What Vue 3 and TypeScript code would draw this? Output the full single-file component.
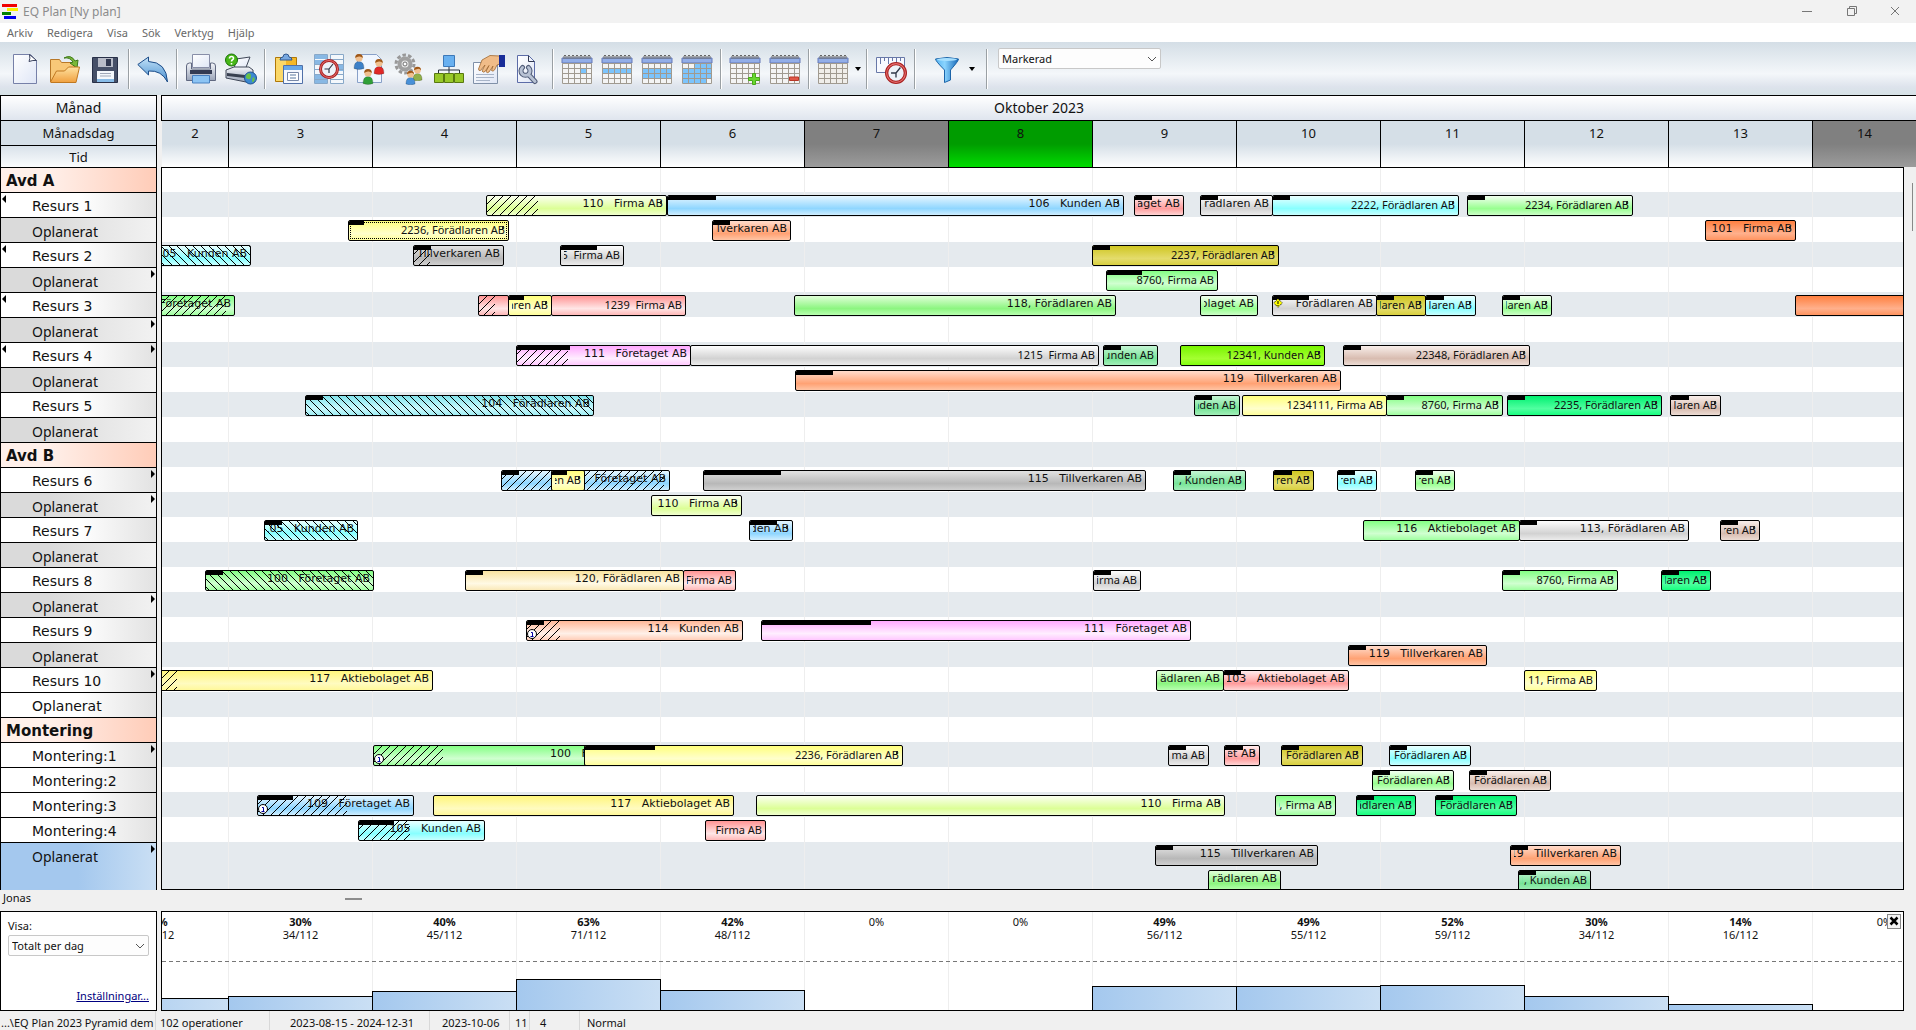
<script setup lang="ts">
import { ref } from 'vue'

interface Extra {
  mark?: number
  hatch?: number
  back?: boolean
  note?: boolean
  wide?: boolean
  selected?: boolean
  info?: boolean
  warn?: boolean
}
interface Bar extends Extra {
  from: number
  to: number
  tone: string
  text: string
}
interface Row {
  label: string
  kind: 'group' | 'resource' | 'unplanned' | 'plain' | 'active'
  prev?: boolean
  next?: boolean
  lanes: Bar[][]
}

const ORIGIN = 162

const tones: Record<string, string[]> = {
  lime: ['#fbfff0', '#dcff96', '#f0ffd0'],
  sky: ['#e6f6ff', '#8fd6ff', '#cfeeff'],
  rose: ['#ffecec', '#ff9c9c', '#ffd5d5'],
  coral: ['#ff9494', '#ffe6e6', '#ffb8b8'],
  silver: ['#fdfdfd', '#d2d2d2', '#ececec'],
  aqua: ['#eaffff', '#88ffff', '#c8ffff'],
  spring: ['#f2fff0', '#98ff90', '#ccffc8'],
  leaf: ['#84ff84', '#d0ffd0', '#a0ffa0'],
  grass: ['#e0ffd8', '#8cf580', '#b8ffb0'],
  lemon: ['#ffff7c', '#ffffcc', '#ffff9c'],
  sun: ['#fff67c', '#fffbc0', '#fff89a'],
  salmon: ['#ffdccc', '#ffa274', '#ffc4a4'],
  orange: ['#ff8040', '#ffb08c', '#ff9460'],
  gray: ['#e2e2e2', '#b8b8b8', '#d0d0d0'],
  olive: ['#cfc622', '#e4dc6c', '#d8d040'],
  mint: ['#c4f5d4', '#78e498', '#a0eeb8'],
  neon: ['#78f400', '#a4ff30', '#80ff10'],
  beige: ['#f8eeea', '#d8bcb0', '#ecdcd4'],
  violet: ['#ffa8ff', '#ffeeff', '#ffc8ff'],
  teal: ['#84e4ec', '#c8f8fc', '#a0eef4'],
  emerald: ['#00f070', '#50ffa0', '#18ff80'],
  cream: ['#f9e3a0', '#fff9e4', '#fae9b8'],
  peach: ['#ffb898', '#fff0e8', '#ffceb8'],
}

const bar = (from: number, to: number, tone: string, text: string, extra: Extra = {}): Bar => ({
  from, to, tone, text, ...extra,
})
const gap = '\u00a0\u00a0\u00a0'
const job = (no: string, name: string) => no + gap + name

const rows: Row[] = [
  { label: 'Avd A', kind: 'group', lanes: [[]] },
  { label: 'Resurs 1', kind: 'resource', prev: true, lanes: [[
    bar(486, 667, 'lime', job('110', 'Firma AB'), { hatch: 538, note: true, wide: true }),
    bar(667, 1124, 'sky', job('106', 'Kunden AB'), { mark: 716, note: true, wide: true }),
    bar(1134, 1184, 'rose', job('103', 'Aktiebolaget AB'), { mark: 1152, wide: true }),
    bar(1200, 1273, 'silver', '113, Förädlaren AB', { mark: 1218, wide: true }),
    bar(1272, 1459, 'aqua', '2222, Förädlaren AB', { mark: 1290, note: true }),
    bar(1467, 1633, 'spring', '2234, Förädlaren AB', { mark: 1485, note: true }),
  ]] },
  { label: 'Oplanerat', kind: 'unplanned', lanes: [[
    bar(348, 509, 'lemon', '2236, Förädlaren AB', { mark: 364, note: true, selected: true }),
    bar(712, 791, 'salmon', job('119', 'Tillverkaren AB'), { mark: 730, wide: true }),
    bar(1705, 1796, 'orange', job('101', 'Firma AB'), { note: true, wide: true }),
  ]] },
  { label: 'Resurs 2', kind: 'resource', prev: true, lanes: [[
    bar(120, 251, 'aqua', job('105', 'Kunden AB'), { hatch: 250, back: true, wide: true }),
    bar(413, 504, 'gray', job('115', 'Tillverkaren AB'), { mark: 431, hatch: 430, wide: true }),
    bar(560, 624, 'silver', '1215\u00a0\u00a0Firma AB', { mark: 597 }),
    bar(1092, 1279, 'olive', '2237, Förädlaren AB', { mark: 1110, note: true }),
  ]] },
  { label: 'Oplanerat', kind: 'unplanned', next: true, lanes: [[
    bar(1106, 1218, 'leaf', '8760, Firma AB', { mark: 1142 }),
  ]] },
  { label: 'Resurs 3', kind: 'resource', prev: true, lanes: [[
    bar(120, 235, 'leaf', job('100', 'Företaget AB'), { hatch: 226, wide: true }),
    bar(478, 509, 'coral', '', { hatch: 495 }),
    bar(508, 552, 'lemon', '2236, Förädlaren AB', { mark: 524, note: true }),
    bar(551, 686, 'coral', '1239\u00a0\u00a0Firma AB'),
    bar(794, 1116, 'grass', '118, Förädlaren AB', { wide: true }),
    bar(1200, 1258, 'spring', job('116', 'Aktiebolaget AB'), { wide: true }),
    bar(1272, 1377, 'silver', 'Förädlaren AB', { mark: 1309, warn: true, wide: true }),
    bar(1376, 1426, 'olive', '2237, Förädlaren AB', { mark: 1394, note: true }),
    bar(1425, 1476, 'aqua', '2222, Förädlaren AB', { mark: 1444, note: true }),
    bar(1502, 1552, 'spring', '2234, Förädlaren AB', { mark: 1520, note: true }),
    bar(1795, 2080, 'orange', ''),
  ]] },
  { label: 'Oplanerat', kind: 'unplanned', next: true, lanes: [[]] },
  { label: 'Resurs 4', kind: 'resource', prev: true, next: true, lanes: [[
    bar(516, 691, 'violet', job('111', 'Företaget AB'), { mark: 570, hatch: 568, wide: true }),
    bar(690, 1099, 'silver', '1215\u00a0\u00a0Firma AB'),
    bar(1103, 1158, 'mint', '12341, Kunden AB', { mark: 1121 }),
    bar(1180, 1325, 'neon', '12341, Kunden AB', { note: true }),
    bar(1343, 1530, 'beige', '22348, Förädlaren AB', { mark: 1361, note: true }),
  ]] },
  { label: 'Oplanerat', kind: 'unplanned', lanes: [[
    bar(795, 1341, 'salmon', job('119', 'Tillverkaren AB'), { mark: 833, wide: true }),
  ]] },
  { label: 'Resurs 5', kind: 'resource', lanes: [[
    bar(305, 594, 'teal', job('104', 'Förädlaren AB'), { mark: 323, hatch: 593, back: true, note: true, wide: true }),
    bar(1194, 1240, 'mint', '12341, Kunden AB', { mark: 1212 }),
    bar(1242, 1387, 'lemon', '1234111, Firma AB'),
    bar(1386, 1503, 'leaf', '8760, Firma AB', { mark: 1404, note: true }),
    bar(1507, 1662, 'emerald', '2235, Förädlaren AB', { mark: 1525, note: true }),
    bar(1670, 1721, 'beige', '22348, Förädlaren AB', { mark: 1689, note: true }),
  ]] },
  { label: 'Oplanerat', kind: 'unplanned', lanes: [[]] },
  { label: 'Avd B', kind: 'group', lanes: [[]] },
  { label: 'Resurs 6', kind: 'resource', next: true, lanes: [[
    bar(501, 670, 'sky', 'Företaget AB', { mark: 519, hatch: 664, note: true, wide: true }),
    bar(551, 585, 'lemon', '2236, Förädlaren AB', { mark: 567, note: true }),
    bar(703, 1146, 'gray', job('115', 'Tillverkaren AB'), { mark: 781, wide: true }),
    bar(1173, 1246, 'mint', '12341, Kunden AB', { mark: 1191, note: true }),
    bar(1273, 1314, 'olive', '2237, Förädlaren AB', { mark: 1292, note: true }),
    bar(1337, 1377, 'aqua', '2222, Förädlaren AB', { mark: 1355, note: true }),
    bar(1415, 1455, 'spring', '2234, Förädlaren AB', { mark: 1433, note: true }),
  ]] },
  { label: 'Oplanerat', kind: 'unplanned', next: true, lanes: [[
    bar(651, 742, 'lime', job('110', 'Firma AB'), { note: true, wide: true }),
  ]] },
  { label: 'Resurs 7', kind: 'resource', lanes: [[
    bar(264, 358, 'aqua', job('105', 'Kunden AB'), { mark: 282, hatch: 357, back: true, wide: true }),
    bar(749, 793, 'sky', job('106', 'Kunden AB'), { mark: 777, note: true, wide: true }),
    bar(1363, 1520, 'leaf', job('116', 'Aktiebolaget AB'), { wide: true }),
    bar(1519, 1689, 'silver', '113, Förädlaren AB', { mark: 1537, wide: true }),
    bar(1720, 1760, 'beige', '22348, Förädlaren AB', { mark: 1738, note: true }),
  ]] },
  { label: 'Oplanerat', kind: 'unplanned', lanes: [[]] },
  { label: 'Resurs 8', kind: 'resource', lanes: [[
    bar(205, 374, 'leaf', job('100', 'Företaget AB'), { mark: 223, hatch: 373, back: true, wide: true }),
    bar(465, 684, 'cream', '120, Förädlaren AB', { mark: 483, wide: true }),
    bar(683, 736, 'coral', '1239\u00a0\u00a0Firma AB'),
    bar(1093, 1141, 'silver', '1215\u00a0\u00a0Firma AB', { mark: 1111 }),
    bar(1502, 1618, 'leaf', '8760, Firma AB', { mark: 1520, note: true }),
    bar(1661, 1711, 'emerald', '2235, Förädlaren AB', { mark: 1679, note: true }),
  ]] },
  { label: 'Oplanerat', kind: 'unplanned', next: true, lanes: [[]] },
  { label: 'Resurs 9', kind: 'resource', lanes: [[
    bar(526, 743, 'peach', job('114', 'Kunden AB'), { mark: 544, hatch: 560, info: true, wide: true }),
    bar(761, 1191, 'violet', job('111', 'Företaget AB'), { mark: 871, wide: true }),
  ]] },
  { label: 'Oplanerat', kind: 'unplanned', lanes: [[
    bar(1348, 1487, 'salmon', job('119', 'Tillverkaren AB'), { mark: 1366, wide: true }),
  ]] },
  { label: 'Resurs 10', kind: 'resource', next: true, lanes: [[
    bar(120, 433, 'sun', job('117', 'Aktiebolaget AB'), { hatch: 177, wide: true }),
    bar(1156, 1224, 'grass', '118, Förädlaren AB', { wide: true }),
    bar(1223, 1349, 'rose', job('103', 'Aktiebolaget AB'), { mark: 1241, wide: true }),
    bar(1524, 1597, 'lemon', '1234111, Firma AB'),
  ]] },
  { label: 'Oplanerat', kind: 'plain', lanes: [[]] },
  { label: 'Montering', kind: 'group', lanes: [[]] },
  { label: 'Montering:1', kind: 'resource', next: true, lanes: [[
    bar(373, 657, 'leaf', job('100', 'Företaget AB'), { hatch: 443, info: true, wide: true }),
    bar(584, 903, 'lemon', '2236, Förädlaren AB', { mark: 655, note: true }),
    bar(1168, 1209, 'silver', '1215\u00a0\u00a0Firma AB', { mark: 1186 }),
    bar(1224, 1260, 'rose', job('103', 'Aktiebolaget AB'), { mark: 1243, note: true, wide: true }),
    bar(1281, 1363, 'olive', 'Förädlaren AB', { mark: 1299, note: true }),
    bar(1389, 1471, 'aqua', 'Förädlaren AB', { mark: 1407, note: true }),
  ]] },
  { label: 'Montering:2', kind: 'resource', lanes: [[
    bar(1372, 1454, 'spring', 'Förädlaren AB', { mark: 1390, note: true }),
    bar(1469, 1551, 'beige', 'Förädlaren AB', { mark: 1487, note: true }),
  ]] },
  { label: 'Montering:3', kind: 'resource', lanes: [[
    bar(257, 414, 'sky', job('109', 'Företaget AB'), { mark: 293, hatch: 347, info: true, wide: true }),
    bar(433, 734, 'sun', job('117', 'Aktiebolaget AB'), { wide: true }),
    bar(756, 1225, 'lime', job('110', 'Firma AB'), { note: true, wide: true }),
    bar(1275, 1336, 'leaf', '8760, Firma AB', { note: true }),
    bar(1356, 1416, 'emerald', '2235, Förädlaren AB', { mark: 1374, note: true }),
    bar(1435, 1517, 'emerald', 'Förädlaren AB', { mark: 1453, note: true }),
  ]] },
  { label: 'Montering:4', kind: 'resource', lanes: [[
    bar(358, 485, 'aqua', job('105', 'Kunden AB'), { mark: 394, hatch: 410, wide: true }),
    bar(705, 766, 'coral', 'Firma AB'),
  ]] },
  { label: 'Oplanerat', kind: 'active', next: true, lanes: [
    [
      bar(1155, 1318, 'gray', job('115', 'Tillverkaren AB'), { mark: 1173, wide: true }),
      bar(1510, 1621, 'salmon', job('119', 'Tillverkaren AB'), { mark: 1528, wide: true }),
    ],
    [
      bar(1208, 1281, 'grass', '118, Förädlaren AB', { wide: true }),
      bar(1518, 1591, 'mint', '12341, Kunden AB', { mark: 1536 }),
    ],
  ] },
]

const barStyle = (b: Bar) => {
  const [top, mid, low] = tones[b.tone]
  return {
    left: b.from - ORIGIN + 'px',
    width: b.to - b.from + 'px',
    background: `linear-gradient(${top}, ${mid} 66%, ${low})`,
  }
}

const days = [
  { day: 2, pct: '20%', load: '23/112', height: 12 },
  { day: 3, pct: '30%', load: '34/112', height: 14 },
  { day: 4, pct: '40%', load: '45/112', height: 19 },
  { day: 5, pct: '63%', load: '71/112', height: 31 },
  { day: 6, pct: '42%', load: '48/112', height: 20 },
  { day: 7, pct: '0%', load: '', height: 0 },
  { day: 8, pct: '0%', load: '', height: 0 },
  { day: 9, pct: '49%', load: '56/112', height: 24 },
  { day: 10, pct: '49%', load: '55/112', height: 24 },
  { day: 11, pct: '52%', load: '59/112', height: 25 },
  { day: 12, pct: '30%', load: '34/112', height: 14 },
  { day: 13, pct: '14%', load: '16/112', height: 6 },
  { day: 14, pct: '0%', load: '', height: 0 },
]

const menus = ['Arkiv', 'Redigera', 'Visa', 'Sök', 'Verktyg', 'Hjälp']
const filter = ref('Markerad')
const view = ref('Totalt per dag')

const zoomCalendars = [
  { name: 'Dag', cells: [[3, 1, 1, 1]] },
  { name: 'Vecka', cells: [[0, 1, 5, 1]] },
  { name: 'Två veckor', cells: [[0, 1, 5, 2]] },
  { name: 'Månadsvy', cells: [[2, 0, 3, 1], [0, 1, 5, 2], [0, 3, 4, 1]] },
]
</script>

<template>
  <div class="app">
    <svg width="0" height="0" class="defs" aria-hidden="true">
      <defs>
        <pattern id="hatch-fwd" width="8" height="8" patternUnits="userSpaceOnUse">
          <path d="M-1 9L9 -1M-1 1L1 -1M7 9L9 7" stroke="#000" stroke-width="1" />
        </pattern>
        <pattern id="hatch-back" width="8" height="8" patternUnits="userSpaceOnUse">
          <path d="M-1 -1L9 9M7 -1L9 1M-1 7L1 9" stroke="#000" stroke-width="1" />
        </pattern>
        <linearGradient id="blue" x1="0" y1="0" x2="0" y2="1"><stop offset="0" stop-color="#c3e2f8" /><stop offset="1" stop-color="#4a90d0" /></linearGradient>
        <linearGradient id="folder" x1="0" y1="0" x2="0" y2="1"><stop offset="0" stop-color="#ffe2a0" /><stop offset="1" stop-color="#f0a040" /></linearGradient>
        <linearGradient id="paper" x1="0" y1="0" x2="1" y2="1"><stop offset="0" stop-color="#fff" /><stop offset="1" stop-color="#dfe6f6" /></linearGradient>
        <linearGradient id="metal" x1="0" y1="0" x2="0" y2="1"><stop offset="0" stop-color="#f4f6fa" /><stop offset="1" stop-color="#9aa4b8" /></linearGradient>
        <linearGradient id="funnel" x1="0" y1="0" x2="1" y2="0"><stop offset="0" stop-color="#58b4f0" /><stop offset=".4" stop-color="#8ad4ff" /><stop offset="1" stop-color="#1668b8" /></linearGradient>
        <symbol id="calendar" viewBox="0 0 32 32">
          <path d="M1 5h30v5H1z" fill="#92aee8" stroke="#6478b8" />
          <path d="M3 6V3q1-2 2 0v3M7 6V3q1-2 2 0v3M11 6V3q1-2 2 0v3M15 6V3q1-2 2 0v3M19 6V3q1-2 2 0v3M23 6V3q1-2 2 0v3M27 6V3q1-2 2 0v3" fill="none" stroke="#666" />
          <path d="M1.500 10.500h29v20h-29zM7.500 10.500v20M13.500 10.500v20M19.500 10.500v20M25.500 10.500v20M1.500 15.500h29M1.500 20.500h29M1.500 25.500h29" fill="none" stroke="#a09a90" />
        </symbol>
        <symbol id="dial" viewBox="0 0 20 20">
          <circle cx="10" cy="10" r="8.500" fill="#eef2f8" stroke="#a82020" stroke-width="3" />
          <circle cx="10" cy="10" r="8.500" fill="none" stroke="#e87070" stroke-width="1" />
          <path d="M10 10l4-5M10 10H5.500M10 10v4" stroke="#303848" stroke-width="1.200" />
        </symbol>
        <symbol id="person" viewBox="0 0 12 16">
          <path d="M1 15q0-7 5-7t5 7q-5 2-10 0z" fill="currentColor" stroke="#00000055" stroke-width=".6" />
          <circle cx="6" cy="4.500" r="3.600" fill="#f0c090" />
          <path d="M2.200 4.500Q2 .6 6 .6t3.800 3.900Q8 2.600 6 3T2.200 4.500z" fill="#a05818" />
        </symbol>
      </defs>
    </svg>

    <header class="titlebar">
      <svg class="logo" viewBox="0 0 16 16" aria-hidden="true">
        <path d="M0 0h15v3H0z" fill="#f00000" /><path d="M5 4h11v3H5z" fill="#f8f000" />
        <path d="M0 8h9v3H0z" fill="#008000" /><path d="M2 12h12v3H2z" fill="#0000f0" />
      </svg>
      <h1>EQ Plan [Ny plan]</h1>
      <div class="controls">
        <button type="button" aria-label="Minimera"><svg viewBox="0 0 10 10"><path d="M0 5.500h10" /></svg></button>
        <button type="button" aria-label="Återställ"><svg viewBox="0 0 10 10"><path d="M.5 2.500h7v7h-7zM2.500 2.500v-2h7v7h-2" /></svg></button>
        <button type="button" aria-label="Stäng"><svg viewBox="0 0 10 10"><path d="M1 1l8 8M9 1l-8 8" /></svg></button>
      </div>
    </header>

    <nav class="menubar">
      <button v-for="m in menus" :key="m" type="button">{{ m }}</button>
    </nav>

    <div class="toolbar">
      <button type="button" class="tool" aria-label="Ny">
        <svg viewBox="0 0 32 32"><path d="M4.500 1.500h17l6 6v23h-23z" fill="url(#paper)" stroke="#7680a8" /><path d="M20.500 1.500q1 4-.5 7 4-1.500 7.500-1z" fill="#fff" stroke="#3c4460" /></svg>
      </button>
      <button type="button" class="tool" aria-label="Öppna">
        <svg viewBox="0 0 32 32"><path d="M1.500 29V6.500h9l2 3h13V29z" fill="#f8c878" stroke="#b87828" /><path d="M15 5q7-4 11 3l3-1-1 8-7-5 3-1q-3-5-9-4z" fill="#7ab838" stroke="#3c7818" /><path d="M1.500 29L7.500 18h8l4-4h11L27 29.500H2z" fill="url(#folder)" stroke="#c07820" /></svg>
      </button>
      <button type="button" class="tool" aria-label="Spara">
        <svg viewBox="0 0 32 32"><path d="M3.500 4.500h25v25h-25z" fill="#465068" stroke="#283048" /><path d="M9 5h15v9H9z" fill="#b8bcc8" /><path d="M17 6h5v7h-5z" fill="#303850" /><path d="M8 18h17v11H8z" fill="#f4f8fc" /><path d="M8 26h17v3H8z" fill="#88bce8" /><path d="M11 20.500h11M11 23h11" stroke="#a0a8b8" /></svg>
      </button>
      <i class="sep"></i>
      <button type="button" class="tool" aria-label="Ångra">
        <svg viewBox="0 0 32 32"><path d="M.8 11.500L11.500 4v4.500q18 .5 19 20.500-6-12-19-11v4z" fill="url(#blue)" stroke="#1c4c88" /></svg>
      </button>
      <i class="sep"></i>
      <button type="button" class="tool" aria-label="Skriv ut">
        <svg viewBox="0 0 32 32"><path d="M7.500 1.500h17v13h-17z" fill="url(#paper)" stroke="#888ea8" /><path d="M1.500 13q0-3 3-3h2v6h19v-6h2q3 0 3 3v14.500h-29z" fill="url(#metal)" stroke="#606880" /><path d="M5 17h22v4H5z" fill="#343c54" /><path d="M7.500 22.500h17v7.500h-17z" fill="#8cc4f4" stroke="#4880c0" /></svg>
      </button>
      <button type="button" class="tool" aria-label="Förhandsgranska">
        <svg viewBox="0 0 32 32"><path d="M11 6l14-2-5 13H9z" fill="url(#paper)" stroke="#404858" /><path d="M1 17l8-3h15l4 3v8l-7 4L1 25z" fill="url(#metal)" stroke="#404858" /><path d="M2 20l18 2v3L2 23z" fill="#384050" /><circle cx="6.500" cy="7" r="6" fill="#48b818" stroke="#187008" /><path d="M4.500 5.500q0-2 2-2t2 1.800q0 1-1 1.500t-1 1.700M6.500 10v1.500" fill="none" stroke="#fff" stroke-width="1.600" /><circle cx="25.500" cy="25" r="6" fill="#3c88d0" stroke="#1c5090" /><path d="M22 21q4-2 4 2t-3 3-2-3zM28 24q3 1 1 4t-2-1z" fill="#68c048" /></svg>
      </button>
      <i class="sep"></i>
      <button type="button" class="tool" aria-label="Klistra in">
        <svg viewBox="0 0 32 32"><path d="M2.500 4.500h21v24h-21z" fill="#f4b828" stroke="#b07808" /><path d="M3 5h10v23H3z" fill="#fbd868" /><path d="M7 7q0-3 3-3 0-3 3-3t3 3q3 0 3 3z" fill="#78a8e0" stroke="#305890" /><path d="M10.500 12.500h19v18h-19z" fill="#f4f8ff" stroke="#5070a8" /><path d="M11 13h18v4H11z" fill="#68a8e8" /><path d="M14.500 19.500h11v8h-11z" fill="#fff" stroke="#7888a8" /><path d="M17 22h6M17 25h6" stroke="#5878a0" /></svg>
      </button>
      <button type="button" class="tool" aria-label="Tidplan">
        <svg viewBox="0 0 32 32"><path d="M1.500 1.500h13v29h-13zM17.500 1.500h13v29h-13z" fill="#f4f8fc" stroke="#88a8c8" /><path d="M2 2h12v4H2zM2 7h12v4H2zM2 22h12v8H2zM18 12h12v6H18z" fill="#88b8e4" /><path d="M2 11.500h12M2 16.500h12M2 21.500h12M2 26.500h12M18 6.500h12M18 11.500h12M18 16.500h12M18 21.500h12M18 26.500h12" stroke="#88a8c8" /><use href="#dial" x="6" y="6" width="20" height="20" /></svg>
      </button>
      <button type="button" class="tool" aria-label="Resursgrupper">
        <svg viewBox="0 0 32 32"><path d="M4.500 1.500h19l5 5v23h-24z" fill="#f0f6ff" stroke="#88a0c8" /><use href="#person" x="0" y="0" width="12" height="17" color="#3c80c8" /><use href="#person" x="20" y="5" width="12" height="17" color="#e02828" /><use href="#person" x="9" y="15" width="12" height="17" color="#30a038" /></svg>
      </button>
      <button type="button" class="tool" aria-label="Resurser">
        <svg viewBox="0 0 32 32"><circle cx="12" cy="11" r="9" fill="none" stroke="#989898" stroke-width="3" stroke-dasharray="3.500 2.155" /><circle cx="12" cy="11" r="5.500" fill="#e8e8e8" stroke="#a0a0a0" stroke-width="4" /><circle cx="12" cy="11" r="2" fill="#fff" stroke="#707070" /><use href="#person" x="19" y="13" width="11" height="15" color="#90b048" /><use href="#person" x="12" y="17" width="11" height="15" color="#4890d8" /></svg>
      </button>
      <button type="button" class="tool" aria-label="Struktur">
        <svg viewBox="0 0 32 32"><path d="M10.500 2.500h11v11h-11z" fill="#68b0f0" stroke="#3c78b8" /><path d="M16 14v6M5.500 20v-3h21v3" fill="none" stroke="#283040" /><path d="M1.500 20.500h9v9h-9zM11.500 20.500h9v9h-9zM21.500 20.500h9v9h-9z" fill="#98c828" stroke="#587810" /></svg>
      </button>
      <button type="button" class="tool" aria-label="Egenskaper">
        <svg viewBox="0 0 32 32"><path d="M.5 9.500h24v21H.5z" fill="url(#paper)" stroke="#8090a8" /><path d="M3 21.500h18M3 24.500h18M3 27.500h14" stroke="#a8b4c8" /><path d="M27 3L17 2.500 9 7 5.500 16q0 2 2 1.500L12 12l-3 6q1 2 3 .5l4-6-3 6q1 2 3 .5l4-6-1.500 4.500q1.500 1.500 3-.5L24 12l3-1z" fill="#f0bc88" stroke="#a06830" stroke-width=".8" /><path d="M26 2h6v12h-6z" fill="#182c98" /></svg>
      </button>
      <button type="button" class="tool" aria-label="Inställningar">
        <svg viewBox="0 0 32 32"><path d="M4.500 2.500h11l6 6v21h-17z" fill="url(#paper)" stroke="#5c6ca8" /><path d="M15.500 2.500v6h6" fill="none" stroke="#303850" /><g fill="none" stroke-linecap="round"><path d="M9.500 14.500a4.500 4.500 0 1 0 6 0M15.500 21.500l6.500 7" stroke="#505c78" stroke-width="5" /><path d="M9.500 14.500a4.500 4.500 0 1 0 6 0M15.500 21.500l6.500 7" stroke="#b8c2d4" stroke-width="3" /></g></svg>
      </button>
      <i class="sep"></i>
      <button v-for="c in zoomCalendars" :key="c.name" type="button" class="tool" :aria-label="c.name">
        <svg viewBox="0 0 32 32">
          <path d="M1 10h30v21H1z" fill="#f4f4f4" />
          <rect v-for="(r, i) in c.cells" :key="i" :x="1 + r[0] * 6" :y="10 + r[1] * 5" :width="r[2] * 6" :height="r[3] * 5" fill="#7cc4fc" />
          <use href="#calendar" width="32" height="32" />
        </svg>
      </button>
      <i class="sep"></i>
      <button type="button" class="tool" aria-label="Lägg till">
        <svg viewBox="0 0 32 32"><path d="M1 10h30v21H1z" fill="#f4f4f4" /><use href="#calendar" width="32" height="32" /><path d="M23.500 20.500h3v4h4v3h-4v4h-3v-4h-4v-3h4z" fill="#68d830" stroke="#48a818" /></svg>
      </button>
      <button type="button" class="tool" aria-label="Ta bort">
        <svg viewBox="0 0 32 32"><path d="M1 10h30v21H1z" fill="#f4f4f4" /><use href="#calendar" width="32" height="32" /><path d="M20.500 24h9v3.500h-9z" fill="#e05848" stroke="#b83828" /></svg>
      </button>
      <i class="sep"></i>
      <button type="button" class="tool drop" aria-label="Kalender">
        <svg viewBox="0 0 32 32"><path d="M1 10h30v21H1z" fill="#f0eeea" /><use href="#calendar" width="32" height="32" /></svg>
        <span class="caret"></span>
      </button>
      <i class="sep"></i>
      <button type="button" class="tool" aria-label="Gå till tid">
        <svg viewBox="0 0 32 32"><path d="M1.500 4.500h28v15h-28z" fill="#f8faff" stroke="#6878a8" /><path d="M5.500 5v6M9.500 5v3M13.500 5v6M17.500 5v3M21.500 5v6M25.500 5v3" stroke="#6878a8" /><use href="#dial" x="10" y="9" width="22" height="22" /></svg>
      </button>
      <i class="sep"></i>
      <button type="button" class="tool drop filter" aria-label="Filter">
        <svg viewBox="0 0 32 32"><path d="M4.500 6q11.500-3 23 0 0 2-8 11v10l-6 2.500V17Q4.500 8 4.500 6z" fill="url(#funnel)" stroke="#1c64a8" /><ellipse cx="16" cy="6.500" rx="10" ry="1.500" fill="#a8e0ff" /></svg>
        <span class="caret"></span>
      </button>
      <i class="sep"></i>
      <div class="pick filter-pick">
        <select v-model="filter" aria-label="Filterval"><option>Markerad</option></select>
        <svg viewBox="0 0 10 6" aria-hidden="true"><path d="M1 1l4 4 4-4" /></svg>
      </div>
    </div>

    <main class="plan">
      <div class="labels">
        <div class="head month">Månad</div>
        <div class="head day">Månadsdag</div>
        <div class="head time">Tid</div>
        <div v-for="(r, i) in rows" :key="i" class="label" :class="r.kind">
          <span v-if="r.prev" class="prev"></span>
          {{ r.label }}
          <span v-if="r.next" class="next"></span>
        </div>
      </div>
      <div class="timeline">
        <div class="month-bar">Oktober 2023</div>
        <div class="day-bar">
          <div v-for="d in days" :key="d.day" class="day-cell" :class="{ off: d.day === 7 || d.day === 14, holiday: d.day === 8 }">{{ d.day }}</div>
        </div>
        <div class="body">
          <div class="chart">
            <div class="rows">
              <div v-for="(r, i) in rows" :key="i" class="row">
                <div v-for="(lane, n) in r.lanes" :key="n" class="lane">
                  <div v-for="(b, k) in lane" :key="k" class="bar" :class="{ wide: b.wide, note: b.note, selected: b.selected }" :style="barStyle(b)">
                    <span class="text">{{ b.text }}</span>
                    <svg v-if="b.hatch" class="hatch" :style="{ width: b.hatch - b.from - 1 + 'px' }"><rect width="100%" height="100%" :fill="b.back ? 'url(#hatch-back)' : 'url(#hatch-fwd)'" /></svg>
                    <span v-if="b.mark" class="mark" :style="{ width: b.mark - b.from - 1 + 'px' }"></span>
                    <svg v-if="b.info" class="info" viewBox="0 0 10 10"><circle cx="5" cy="5" r="4.500" fill="#fff" stroke="#000" /><path d="M4 3.500h1.500v4M3.500 7.500h3" fill="none" stroke="#0000a0" /></svg>
                    <svg v-if="b.warn" class="warn" viewBox="0 0 10 10"><path d="M5 .7L9.300 5 5 9.300.7 5z" fill="#ffff00" stroke="#000" stroke-dasharray="1 1" /><path d="M5 3v3M5 7v1" stroke="#000" /></svg>
                  </div>
                </div>
              </div>
            </div>
            <div class="grid"><i v-for="d in days" :key="d.day"></i></div>
          </div>
          <div class="scroll"><span></span></div>
        </div>
      </div>
    </main>

    <div class="splitter"><span class="user">Jonas</span><span class="grip"></span></div>

    <section class="load">
      <div class="load-side">
        <label for="view">Visa:</label>
        <div class="pick">
          <select id="view" v-model="view"><option>Totalt per dag</option></select>
          <svg viewBox="0 0 10 6" aria-hidden="true"><path d="M1 1l4 4 4-4" /></svg>
        </div>
        <a href="#">Inställningar...</a>
      </div>
      <div class="load-chart">
        <div class="strip">
          <div v-for="d in days" :key="d.day" class="load-day">
            <b v-if="d.load">{{ d.pct }}</b><span v-else>{{ d.pct }}</span>
            <span>{{ d.load }}</span>
            <div v-if="d.height" class="column" :style="{ height: d.height + 'px' }"></div>
          </div>
        </div>
        <svg class="limit" aria-hidden="true"><path d="M0 .5h3000" stroke="#777" stroke-dasharray="4 3" /></svg>
        <button type="button" class="close" aria-label="Stäng beläggning"><svg viewBox="0 0 10 10"><path d="M1.500 1.500l7 7M8.500 1.500l-7 7" stroke="#000" stroke-width="2.500" /></svg></button>
      </div>
    </section>

    <footer class="status">
      <span class="s-file">...\EQ Plan 2023 Pyramid dem</span>
      <span class="s-ops">102 operationer</span>
      <span class="s-range">2023-08-15 - 2024-12-31</span>
      <span class="s-date">2023-10-06</span>
      <span class="s-hour">11</span>
      <span class="s-num">4</span>
      <span class="s-mode">Normal</span>
    </footer>
  </div>
</template>

<style>
body {
  background: #f0f0f0;
}
</style>

<style scoped>
.app {
  display: flex;
  flex-direction: column;
  height: 100vh;
  overflow: hidden;
  background: #f0f0f0;
  color: #111;
  font: 11px/14px 'Noto Sans', 'Open Sans', sans-serif;
}
.app * {
  box-sizing: border-box;
}
.defs {
  position: absolute;
}
button {
  border: 0;
  padding: 0;
  background: none;
  font: inherit;
  color: inherit;
}
.titlebar {
  display: flex;
  align-items: center;
  flex: none;
  height: 23px;
  padding-left: 2px;
  gap: 5px;
  background: #f2f2f2;
  color: #8c8c8c;
}
.logo {
  width: 16px;
  height: 16px;
}
h1 {
  flex: 1;
  margin: 0;
  font-size: 12px;
  font-weight: 400;
}
.controls {
  display: flex;
  height: 20px;
}
.controls button {
  width: 45px;
}
.controls button:last-child {
  width: 42px;
}
.controls svg {
  width: 10px;
  height: 10px;
  fill: none;
  stroke: #777;
}
.menubar {
  display: flex;
  flex: none;
  gap: 14px;
  height: 19px;
  padding-left: 7px;
  background: #fff;
  color: #686868;
}
.menubar button {
  line-height: 20px;
}
.toolbar {
  display: flex;
  align-items: center;
  flex: none;
  height: 53px;
  padding-left: 5px;
  background: linear-gradient(#d4dee6, #f4f7fa 60%, #dde3ec 85%, #d6e2e6);
}
.tool {
  display: flex;
  align-items: center;
  justify-content: center;
  width: 40px;
  height: 52px;
}
.tool svg {
  flex: none;
  width: 32px;
  height: 32px;
}
.tool.drop {
  width: 50px;
  gap: 6px;
  justify-content: flex-start;
  padding-left: 4px;
}
.tool.filter {
  margin: 0 6px 0 8px;
}
.caret {
  border: 3px solid transparent;
  border-top: 4px solid #000;
  border-bottom: 0;
}
.sep {
  width: 8px;
  height: 40px;
  background: linear-gradient(90deg, transparent 3px, #9aa0a4 3px 4px, #fff 4px 5px, transparent 5px);
}
.pick {
  position: relative;
}
.pick select {
  width: 100%;
  height: 21px;
  padding: 0 3px;
  appearance: none;
  background: #fdfdfd;
  border: 1px solid #c8c8c8;
  border-radius: 2px;
  font: inherit;
  color: #111;
}
.pick svg {
  position: absolute;
  right: 4px;
  top: 8px;
  width: 10px;
  height: 6px;
  fill: none;
  stroke: #555;
}
.filter-pick {
  align-self: flex-start;
  width: 163px;
  margin: 6px 0 0 7px;
}
.plan {
  display: flex;
  flex: 1;
  min-height: 0;
  gap: 4px;
}
.labels {
  display: flex;
  flex-direction: column;
  flex: none;
  width: 157px;
  overflow: hidden;
  border: 1px solid #000;
  border-bottom: 0;
}
.head {
  display: flex;
  align-items: center;
  justify-content: center;
  flex: none;
  height: 25px;
  border-bottom: 1px solid #000;
  font-size: 13px;
}
.head.month {
  font-size: 14px;
  background: linear-gradient(#fff, #dfe5ee);
}
.head.day {
  background: #d6e0e8;
}
.head.time {
  height: 22px;
  background: linear-gradient(#d9e2ea, #fafcfd);
}
.label {
  position: relative;
  display: flex;
  align-items: center;
  flex: none;
  height: 25px;
  padding: 2px 0 0 31px;
  border-bottom: 1px solid #000;
  background: linear-gradient(90deg, #fff 50%, #e2e2e2);
  font: 14px/20px 'DejaVu Sans', sans-serif;
}
.label.group {
  padding-left: 5px;
  background: linear-gradient(90deg, #fff0ea 30%, #ffccb8);
  font-weight: 700;
  font-size: 15px;
}
.label.unplanned,
.label.active {
  padding-top: 3px;
  background: linear-gradient(90deg, #dadada 30%, #f2f2f2);
  font: 14px/20px 'Noto Sans', sans-serif;
}
.label.active {
  flex: 1;
  align-items: flex-start;
  padding-top: 4px;
  border-bottom: 0;
  background: linear-gradient(90deg, #a4c8ee 50%, #cadff4);
}
.prev,
.next {
  position: absolute;
  top: 2px;
  border: 4px solid transparent;
}
.prev {
  left: 1px;
  border-right-color: #000;
  border-left: 0;
}
.next {
  right: 1px;
  border-left-color: #000;
  border-right: 0;
}
.timeline {
  display: flex;
  flex-direction: column;
  flex: 1;
  min-width: 0;
}
.month-bar {
  display: flex;
  align-items: center;
  justify-content: center;
  flex: none;
  height: 26px;
  border: 1px solid #000;
  border-right: 0;
  background: linear-gradient(#fff, #dfe5ee);
  font-size: 14px;
}
.day-bar {
  display: flex;
  flex: none;
  height: 46px;
  padding-left: 1px;
}
.day-cell {
  flex: none;
  width: 144px;
  padding-top: 3px;
  border-left: 1px solid #000;
  background: linear-gradient(#d5dfe7 50%, #fff);
  font-size: 13px;
  line-height: 18px;
  text-align: center;
}
.day-cell:first-child {
  width: 66px;
  border-left: 0;
}
.day-cell:last-child {
  flex: 1;
}
.day-cell.off {
  background: linear-gradient(#808080 50%, #9c9c9c);
}
.day-cell.holiday {
  background: linear-gradient(#009c00 50%, #00dc00);
}
.body {
  display: flex;
  flex: 1;
  min-height: 0;
}
.chart {
  position: relative;
  flex: 1;
  overflow: hidden;
  border: 1px solid #000;
  background: #e5eaee;
}
.row {
  background: #fff;
}
.row:nth-child(even) {
  background: #e5eaee;
}
.lane {
  position: relative;
  height: 25px;
}
.row:first-child .lane {
  height: 24px;
}
.grid {
  position: absolute;
  inset: 0;
  display: flex;
  margin-left: -78px;
  pointer-events: none;
}
.grid i {
  flex: none;
  width: 144px;
  border-left: 1px solid #eee;
}
.bar {
  position: absolute;
  z-index: 1;
  top: 3px;
  display: flex;
  justify-content: flex-end;
  height: 21px;
  padding: 0 3px;
  overflow: hidden;
  border: 1px solid #000;
  border-radius: 2px;
}
.text {
  display: flex;
  justify-content: flex-end;
  width: 100%;
  overflow: hidden;
  white-space: nowrap;
  line-height: 17px;
}
.wide .text {
  font: 11px/16px 'DejaVu Sans', sans-serif;
}
.hatch,
.mark,
.info,
.warn {
  position: absolute;
  left: 0;
}
.hatch {
  top: 0;
  height: 19px;
}
.mark {
  top: -1px;
  height: 5px;
  background: #000;
}
.info {
  bottom: 1px;
  width: 10px;
  height: 10px;
}
.warn {
  top: 2px;
  width: 10px;
  height: 10px;
}
.note::after {
  content: '';
  position: absolute;
  top: 5px;
  right: 4px;
  width: 2px;
  height: 3px;
  background: #222;
}
.selected::before {
  content: '';
  position: absolute;
  inset: 1px;
  border: 1px dotted #000;
}
.scroll {
  width: 12px;
  padding: 16px 0 0 8px;
  flex: none;
}
.scroll span {
  display: block;
  width: 1px;
  height: 48px;
  background: #888;
}
.splitter {
  display: flex;
  align-items: center;
  flex: none;
  height: 21px;
  padding: 0 3px 4px;
}
.user {
  width: 342px;
  line-height: 12px;
  padding-bottom: 2px;
}
.grip {
  width: 17px;
  height: 2px;
  background: #8c8c8c;
}
.load {
  display: flex;
  flex: none;
  gap: 4px;
  padding-right: 12px;
}
.load-side {
  display: flex;
  flex-direction: column;
  flex: none;
  width: 157px;
  height: 100px;
  padding: 7px 7px;
  border: 1px solid #000;
  background: #fff;
}
.load-side label {
  height: 16px;
}
.load-side a {
  margin-top: auto;
  align-self: flex-end;
  color: #000080;
}
.load-chart {
  position: relative;
  flex: 1;
  overflow: hidden;
  border: 1px solid #000;
  background: #fff;
}
.strip {
  display: flex;
  height: 100%;
  margin-left: -78px;
}
.load-day {
  display: flex;
  flex-direction: column;
  align-items: center;
  flex: none;
  width: 144px;
  padding-top: 3px;
  border-left: 1px solid #eee;
  line-height: 13px;
}
.column {
  position: relative;
  flex: none;
  width: 145px;
  margin: auto -1px 0;
  border: 1px solid #000;
  border-bottom: 0;
  background: linear-gradient(90deg, #a4c8ee, #cadff4);
}
.limit {
  position: absolute;
  left: 0;
  top: 49px;
  width: 100%;
  height: 1px;
}
.close {
  position: absolute;
  top: 2px;
  right: 2px;
  width: 14px;
  height: 15px;
  border: 1px solid #888;
  background: #f4f4f4;
  line-height: 10px;
}
.close svg {
  width: 10px;
  height: 10px;
}
.status {
  display: flex;
  flex: none;
  height: 19px;
  line-height: 24px;
  white-space: nowrap;
}
.status span {
  flex: none;
  overflow: hidden;
  border-right: 1px solid #d8d8d8;
}
.status .s-file {
  width: 156px;
  padding-left: 1px;
}
.status .s-ops {
  width: 114px;
  padding-left: 4px;
}
.status .s-range {
  width: 160px;
  padding-left: 20px;
}
.status .s-date {
  width: 80px;
  padding-left: 12px;
}
.status .s-hour {
  width: 20px;
  padding-left: 5px;
}
.status .s-num {
  width: 50px;
  padding-left: 10px;
}
.status .s-mode {
  padding-left: 7px;
  border-right: 0;
}
</style>
